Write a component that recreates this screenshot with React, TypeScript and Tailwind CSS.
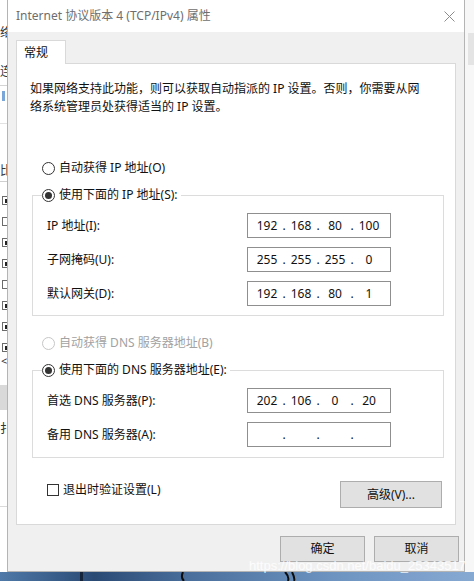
import React from "react";

const sans = "font-['Noto_Sans','Noto_Sans_CJK_SC',sans-serif]";

function Radio({ checked = false, disabled = false }: { checked?: boolean; disabled?: boolean }) {
  return (
    <span
      className={
        disabled
          ? "flex size-[13px] shrink-0 items-center justify-center rounded-full border border-[#c6c6c6] bg-white"
          : "flex size-[13px] shrink-0 items-center justify-center rounded-full border border-[#333333] bg-white"
      }
    >
      {checked && <span className="size-[7px] rounded-full bg-[#333333]" />}
    </span>
  );
}

function IpBox({ parts }: { parts: string[] }) {
  return (
    <div className="flex h-[25px] w-[144px] shrink-0 items-center border border-[#8f8f8f] bg-white pl-[6px] text-[12px] leading-[16px] text-[#111111]">
      {parts.map((p, i) => (
        <React.Fragment key={i}>
          <span className="w-[26px] text-center">{p}</span>
          {i < 3 && <span className="w-[8px] text-center">.</span>}
        </React.Fragment>
      ))}
    </div>
  );
}

function FieldRow({ label, parts }: { label: string; parts: string[] }) {
  return (
    <div className="flex items-center">
      <span className="w-[200px] text-[12px] leading-[18px] text-[#111111]">{label}</span>
      <IpBox parts={parts} />
    </div>
  );
}

function WinButton({ label, wide = false }: { label: string; wide?: boolean }) {
  return (
    <button
      className={
        wide
          ? "flex h-[27px] w-[102px] items-center justify-center border border-[#adadad] bg-[#e1e1e1] text-[12px] text-[#111111]"
          : "flex h-[26px] w-[85px] items-center justify-center border border-[#adadad] bg-[#e1e1e1] text-[12px] text-[#111111]"
      }
    >
      {label}
    </button>
  );
}

function MiniCheck({ checked }: { checked: boolean }) {
  return (
    <div className="mt-[12px] ml-[2px] flex size-[9px] items-center justify-center border border-[#6b6b6b] bg-white">
      {checked && <span className="size-[4px] bg-[#222222]" />}
    </div>
  );
}

// the window behind the dialog, only a sliver is visible
function LeftStrip() {
  const checks = [true, false, true, true, false, true, true, true];
  return (
    <div className="flex w-[7px] shrink-0 flex-col overflow-hidden bg-white text-[12px] leading-[14px] text-[#333333]">
      <span className="mt-[26px] whitespace-nowrap">络</span>
      <span className="mt-[25px] whitespace-nowrap">连</span>
      <div className="mt-[6px] h-px w-full bg-[#d4d4d4]" />
      <div className="mt-[5px] ml-[2px] h-[10px] w-[3px] bg-[#7aa7d8]" />
      <div className="mt-[22px] h-px w-full bg-[#e2e2e2]" />
      <span className="mt-[40px] whitespace-nowrap">比</span>
      <div className="mt-[3px] h-px w-full bg-[#cfcfcf]" />
      <div className="mt-[2px]" />
      {checks.map((c, i) => (
        <MiniCheck key={i} checked={c} />
      ))}
      <span className="mt-[3px] ml-[1px] text-[11px] leading-[12px]">&lt;</span>
      <div className="mt-[18px] h-[25px] w-full bg-[#d9d9d9]" />
      <span className="mt-[12px] whitespace-nowrap">扌</span>
      <div className="mt-[70px] h-px w-full bg-[#dadada]" />
    </div>
  );
}

function RightStrip() {
  return (
    <div className="flex w-[9px] shrink-0 flex-col bg-[#f7f7f7]">
      <div className="mt-[33px] ml-[3px] h-[32px] w-[6px] bg-[#e4e4e4]" />
    </div>
  );
}

function Wallpaper() {
  return (
    <svg width="474" height="9" viewBox="0 0 474 9" className="block shrink-0">
      <defs>
        <linearGradient id="wp" x1="0" x2="1" y1="0" y2="0">
          <stop offset="0" stopColor="#4f79a8" />
          <stop offset="0.2" stopColor="#2a4a74" />
          <stop offset="0.4" stopColor="#4a6f9c" />
          <stop offset="0.7" stopColor="#6d93c0" />
          <stop offset="1" stopColor="#86a9d2" />
        </linearGradient>
      </defs>
      <rect width="474" height="9" fill="url(#wp)" />
      <rect x="80" width="3" height="9" fill="#15243a" />
      <path d="M183 0 C181 4 182 7 184 9" stroke="#0d0d0d" strokeWidth="2" fill="none" />
      <path d="M285 0 C288 3 289 6 288 9 M292 0 C294 4 295 7 294 9" stroke="#0d0d0d" strokeWidth="2" fill="none" />
    </svg>
  );
}

export default function App() {
  return (
    <div className={`relative flex h-[581px] w-[474px] flex-col overflow-hidden bg-white ${sans}`}>
      <div className="flex h-[572px]">
        <LeftStrip />

        {/* dialog */}
        <div className="flex w-[458px] shrink-0 flex-col border-x border-b border-[#b4b4b4] bg-[#f0f0f0]">
          {/* title bar */}
          <div className="flex h-[32px] shrink-0 items-center justify-between bg-white pr-[9px] pl-[8px]">
            <span className="text-[12px] leading-[16px] text-[#6e6e6e]">
              Internet 协议版本 4 (TCP/IPv4) 属性
            </span>
            <svg width="11" height="11" viewBox="0 0 11 11">
              <path d="M0.5 0.5 L10.5 10.5 M10.5 0.5 L0.5 10.5" stroke="#8c8c8c" strokeWidth="1" />
            </svg>
          </div>

          <div className="flex flex-1 flex-col px-[8px] pt-[8px]">
            {/* tab */}
            <div className="relative z-10 -mb-px flex h-[24px] w-[50px] items-center border-x border-t border-[#d9d9d9] bg-white pl-[7px] text-[12px] leading-[18px] text-[#111111]">
              常规
            </div>

            {/* tab panel */}
            <div className="flex flex-col border border-[#d9d9d9] bg-white pb-[16px] text-[12px] text-[#111111]">
              <p className="mt-[16px] pl-[13px] leading-[18px]">
                如果网络支持此功能，则可以获取自动指派的 IP 设置。否则，你需要从网
                <br />
                络系统管理员处获得适当的 IP 设置。
              </p>

              <div className="mt-[43px] flex h-[18px] items-center gap-[4px] pl-[25px] leading-[18px]">
                <Radio />
                <span>自动获得 IP 地址(O)</span>
              </div>

              <fieldset className="mt-[9px] mr-[11px] ml-[15px] border border-[#dcdcdc]">
                <legend className="ml-[9px] flex h-[18px] items-center gap-[4px] pr-[3px] leading-[18px]">
                  <Radio checked />
                  <span>使用下面的 IP 地址(S):</span>
                </legend>
                <div className="flex flex-col gap-[9px] pt-[9px] pb-[9px] pl-[14px]">
                  <FieldRow label="IP 地址(I):" parts={["192", "168", "80", "100"]} />
                  <FieldRow label="子网掩码(U):" parts={["255", "255", "255", "0"]} />
                  <FieldRow label="默认网关(D):" parts={["192", "168", "80", "1"]} />
                </div>
              </fieldset>

              <div className="mt-[18px] flex h-[18px] items-center gap-[4px] pl-[25px] leading-[18px] text-[#a2a2a2]">
                <Radio disabled />
                <span>自动获得 DNS 服务器地址(B)</span>
              </div>

              <fieldset className="mt-[9px] mr-[11px] ml-[15px] border border-[#dcdcdc]">
                <legend className="ml-[9px] flex h-[18px] items-center gap-[4px] pr-[3px] leading-[18px]">
                  <Radio checked />
                  <span>使用下面的 DNS 服务器地址(E):</span>
                </legend>
                <div className="flex flex-col gap-[9px] pt-[9px] pb-[10px] pl-[14px]">
                  <FieldRow label="首选 DNS 服务器(P):" parts={["202", "106", "0", "20"]} />
                  <FieldRow label="备用 DNS 服务器(A):" parts={["", "", "", ""]} />
                </div>
              </fieldset>

              <div className="mt-[23px] flex items-start justify-between pr-[13px] pl-[30px]">
                <label className="flex h-[18px] items-center gap-[4px] leading-[18px]">
                  <span className="size-[12px] border border-[#333333] bg-white" />
                  <span>退出时验证设置(L)</span>
                </label>
                <WinButton label="高级(V)..." wide />
              </div>
            </div>

            {/* dialog buttons */}
            <div className="mt-[11px] flex justify-end gap-[9px] pr-[-3px] pb-[9px]">
              <div className="-mr-[3px] flex gap-[9px]">
                <WinButton label="确定" />
                <WinButton label="取消" />
              </div>
            </div>
          </div>
        </div>

        <RightStrip />
      </div>

      <Wallpaper />

      {/* blog watermark over the screenshot */}
      <span className="pointer-events-none absolute top-[558px] left-[249px] font-['Liberation_Sans',sans-serif] text-[13px] leading-[16px] whitespace-nowrap text-white/80">
        https://blog.csdn.net/baidu_25343517
      </span>
    </div>
  );
}
